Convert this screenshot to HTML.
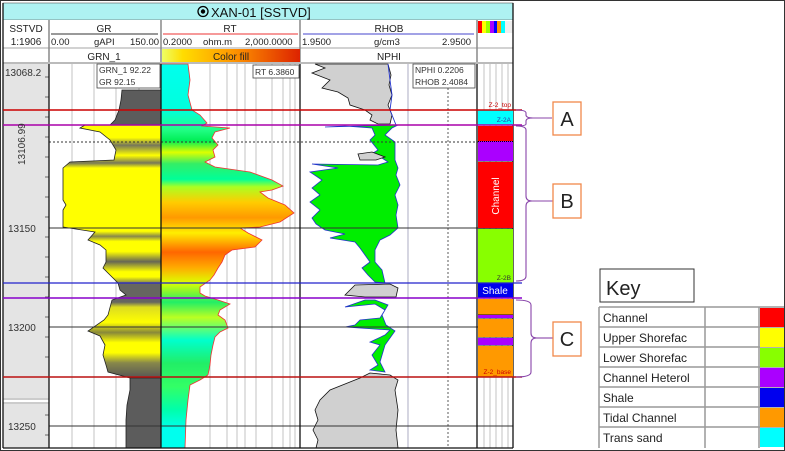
<!DOCTYPE html>
<html><head><meta charset="utf-8"><style>
html,body{margin:0;padding:0;background:#fff;}
svg{display:block;font-family:"Liberation Sans",sans-serif;}
</style></head><body>
<svg width="785" height="451" viewBox="0 0 785 451" xmlns="http://www.w3.org/2000/svg">
<defs>
<linearGradient id="gry" gradientUnits="userSpaceOnUse" x1="0" y1="125" x2="0" y2="378">
<stop offset="0" stop-color="#ffff00"/><stop offset="0.05" stop-color="#ffff00"/>
<stop offset="0.08" stop-color="#77775a"/><stop offset="0.12" stop-color="#ffff00"/>
<stop offset="0.15" stop-color="#77775a"/><stop offset="0.17" stop-color="#ffff00"/>
<stop offset="0.42" stop-color="#ffff00"/><stop offset="0.44" stop-color="#88884a"/>
<stop offset="0.46" stop-color="#ffff00"/><stop offset="0.5" stop-color="#ffff00"/>
<stop offset="0.54" stop-color="#666655"/><stop offset="0.58" stop-color="#ffff00"/>
<stop offset="0.6" stop-color="#ffff00"/><stop offset="0.63" stop-color="#666660"/>
<stop offset="0.7" stop-color="#666660"/><stop offset="0.72" stop-color="#dddd20"/>
<stop offset="0.78" stop-color="#ffff00"/><stop offset="0.82" stop-color="#88883a"/>
<stop offset="0.86" stop-color="#ffff00"/><stop offset="0.9" stop-color="#ffff00"/>
<stop offset="0.94" stop-color="#88884a"/><stop offset="1" stop-color="#555555"/>
</linearGradient>
<linearGradient id="rtg" gradientUnits="userSpaceOnUse" x1="0" y1="64" x2="0" y2="448">
<stop offset="0" stop-color="#00ffee"/><stop offset="0.12" stop-color="#00ffdd"/>
<stop offset="0.17" stop-color="#22ff88"/><stop offset="0.2" stop-color="#00ee55"/>
<stop offset="0.23" stop-color="#ddff00"/><stop offset="0.26" stop-color="#33ee66"/>
<stop offset="0.3" stop-color="#00ff99"/><stop offset="0.32" stop-color="#aaff22"/>
<stop offset="0.36" stop-color="#ffcc00"/><stop offset="0.4" stop-color="#ff9900"/>
<stop offset="0.44" stop-color="#ffee00"/><stop offset="0.49" stop-color="#ff6600"/>
<stop offset="0.53" stop-color="#ffaa00"/><stop offset="0.57" stop-color="#ddff00"/>
<stop offset="0.62" stop-color="#22ee66"/><stop offset="0.66" stop-color="#bbff22"/>
<stop offset="0.72" stop-color="#00ffcc"/><stop offset="0.78" stop-color="#22ee66"/>
<stop offset="0.84" stop-color="#33ff66"/><stop offset="0.9" stop-color="#00ffaa"/>
<stop offset="0.95" stop-color="#00ffee"/><stop offset="1" stop-color="#00ffee"/>
</linearGradient>
<linearGradient id="cf" x1="0" x2="1" y1="0" y2="0">
<stop offset="0" stop-color="#eeff66"/><stop offset="0.15" stop-color="#ffdd00"/>
<stop offset="0.5" stop-color="#ff9900"/><stop offset="1" stop-color="#dd2200"/>
</linearGradient>
</defs>
<rect x="0" y="0" width="785" height="451" fill="#fff"/>
<rect x="0.5" y="0.5" width="784" height="450" fill="none" stroke="#333"/>
<rect x="3" y="3" width="510" height="17" fill="#aef2f2" stroke="#555" stroke-width="0.6"/>
<circle cx="203" cy="11.5" r="5" fill="none" stroke="#000" stroke-width="1.3"/>
<circle cx="203" cy="11.5" r="2.2" fill="#000"/>
<text x="211" y="17" font-size="13" fill="#111">XAN-01 [SSTVD]</text>
<rect x="3" y="20" width="510" height="44" fill="#fff"/>
<g stroke="#222" stroke-width="0.8">
<line x1="49" y1="20" x2="49" y2="64"/><line x1="161" y1="20" x2="161" y2="64"/>
<line x1="300" y1="20" x2="300" y2="64"/><line x1="477" y1="20" x2="477" y2="64"/>
<line x1="3" y1="48" x2="513" y2="48" stroke="#888"/>
<line x1="3" y1="63" x2="513" y2="63" stroke="#bbb" stroke-width="2"/>
</g>
<g font-size="10" fill="#222" text-anchor="middle">
<text x="26" y="32">SSTVD</text><text x="104" y="32">GR</text><text x="230" y="32">RT</text><text x="389" y="32">RHOB</text>
<text x="26" y="45">1:1906</text><text x="104" y="60">GRN_1</text><text x="389" y="60">NPHI</text>
</g>
<line x1="51" y1="34" x2="158" y2="34" stroke="#333"/>
<line x1="163" y1="34" x2="298" y2="34" stroke="#e33"/>
<line x1="303" y1="34" x2="474" y2="34" stroke="#44c"/>
<g font-size="9.5" fill="#222">
<text x="51" y="45">0.00</text><text x="94" y="45">gAPI</text><text x="130" y="45">150.00</text>
<text x="163" y="45">0.2000</text><text x="203" y="45">ohm.m</text><text x="245" y="45">2,000.0000</text>
<text x="302" y="45">1.9500</text><text x="374" y="45">g/cm3</text><text x="442" y="45">2.9500</text>
</g>
<rect x="162" y="49" width="138" height="13" fill="url(#cf)"/>
<text x="231" y="60" font-size="10" text-anchor="middle" fill="#222">Color fill</text>
<rect x="478" y="21" width="4" height="12" fill="#f00"/><rect x="482" y="21" width="4" height="12" fill="#ff0"/>
<rect x="486" y="21" width="4" height="12" fill="#9f0"/><rect x="490" y="21" width="4" height="12" fill="#a0f"/>
<rect x="494" y="21" width="3" height="12" fill="#00f"/><rect x="497" y="21" width="4" height="12" fill="#f90"/>
<rect x="501" y="21" width="4" height="12" fill="#0ff"/><rect x="505" y="21" width="8" height="12" fill="#eee"/>
<rect x="3" y="64" width="46" height="384" fill="#e4e4e4"/>
<rect x="3" y="398" width="46" height="6" fill="#fff"/>
<line x1="3" y1="399" x2="49" y2="399" stroke="#333" stroke-width="0.6"/>
<line x1="3" y1="403" x2="49" y2="403" stroke="#333" stroke-width="0.6"/>
<g stroke="#aaa" stroke-width="0.7">
<line x1="72" y1="64" x2="72" y2="448"/><line x1="94" y1="64" x2="94" y2="448"/><line x1="116" y1="64" x2="116" y2="448"/><line x1="139" y1="64" x2="139" y2="448"/>
<line x1="210" y1="64" x2="210" y2="448"/><line x1="227" y1="64" x2="227" y2="448"/><line x1="237" y1="64" x2="237" y2="448"/><line x1="245" y1="64" x2="245" y2="448"/>
<line x1="256" y1="64" x2="256" y2="448"/><line x1="272" y1="64" x2="272" y2="448"/><line x1="283" y1="64" x2="283" y2="448"/><line x1="290" y1="64" x2="290" y2="448"/><line x1="295" y1="64" x2="295" y2="448"/>
<line x1="408" y1="64" x2="408" y2="448" stroke="#88a"/>
<line x1="484" y1="64" x2="484" y2="448"/><line x1="490" y1="64" x2="490" y2="448"/><line x1="496" y1="64" x2="496" y2="448"/><line x1="502" y1="64" x2="502" y2="448"/><line x1="508" y1="64" x2="508" y2="448"/>
</g>
<line x1="448" y1="64" x2="448" y2="448" stroke="#333" stroke-dasharray="2,2" stroke-width="0.8"/>
<g stroke="#333" stroke-width="0.7">
<line x1="45" y1="77" x2="49" y2="77"/><line x1="45" y1="97" x2="49" y2="97"/><line x1="45" y1="117" x2="49" y2="117"/><line x1="45" y1="137" x2="49" y2="137"/><line x1="45" y1="157" x2="49" y2="157"/><line x1="45" y1="177" x2="49" y2="177"/><line x1="45" y1="197" x2="49" y2="197"/><line x1="45" y1="217" x2="49" y2="217"/><line x1="45" y1="237" x2="49" y2="237"/><line x1="45" y1="257" x2="49" y2="257"/><line x1="45" y1="277" x2="49" y2="277"/><line x1="45" y1="297" x2="49" y2="297"/><line x1="45" y1="317" x2="49" y2="317"/><line x1="45" y1="337" x2="49" y2="337"/><line x1="45" y1="357" x2="49" y2="357"/><line x1="45" y1="377" x2="49" y2="377"/><line x1="45" y1="415" x2="49" y2="415"/><line x1="45" y1="435" x2="49" y2="435"/>
</g>
<polygon fill="#5c5c5c" stroke="#222" stroke-width="0.8" points="161,90 122,90 121,100 119,110 115,120 110,125 161,125"/>
<polygon fill="url(#gry)" stroke="#222" stroke-width="0.8" points="161,125 85,125 80,128 100,132 110,140 116,150 114,160 70,162 63,168 63,200 66,205 63,210 63,227 95,232 88,240 100,245 106,250 106,262 103,268 110,275 118,283 120,290 126,295 112,300 108,315 104,320 88,331 100,336 105,345 103,355 106,365 108,372 130,378 161,378"/>
<polygon fill="#5c5c5c" stroke="#222" stroke-width="0.8" points="161,378 130,378 130,390 127,405 126,420 126,448 161,448"/>
<polygon fill="url(#rtg)" stroke="#e33" stroke-width="0.8" points="161,64 188,64 190,80 188,95 192,110 200,115 207,123 202,126 230,128 215,132 212,138 218,145 213,150 215,157 205,162 215,167 250,172 272,180 283,186 272,190 260,192 268,198 285,205 294,213 280,222 260,227 240,228 248,233 262,240 255,247 232,250 225,255 222,262 218,268 214,275 210,280 200,287 200,293 205,296 218,300 230,304 220,310 218,315 225,320 228,328 220,332 215,337 213,345 211,355 210,365 208,375 200,380 190,385 188,400 186,420 185,448 161,448"/>
<polygon fill="#d0d0d0" stroke="#111" stroke-width="0.8" points="315,64 325,68 312,73 330,80 322,88 338,92 348,98 350,105 365,110 372,115 370,120 378,124 390,124 392,115 388,105 392,95 389,85 391,75 388,64"/>
<polygon fill="#00ee00" stroke="#2233cc" stroke-width="0.8" points="325,127 345,126 372,128 375,135 370,140 374,145 378,150 370,155 382,158 388,162 378,165 312,164 338,168 310,172 322,180 312,188 320,195 310,202 320,210 312,218 316,224 325,230 345,234 330,238 355,242 360,248 365,255 370,262 362,268 368,275 375,282 385,283 382,270 375,262 375,250 380,240 390,235 398,228 396,215 398,205 395,195 400,185 396,175 398,168 395,160 395,142 385,135 392,128 398,125"/>
<polygon fill="#d0d0d0" stroke="#111" stroke-width="0.8" points="358,154 372,152 385,157 376,160 360,160"/>
<polygon fill="#d0d0d0" stroke="#111" stroke-width="0.8" points="355,285 390,284 398,288 396,297 365,297 345,295 350,290"/>
<polygon fill="#00ee00" stroke="#2233cc" stroke-width="0.8" points="345,307 375,304 385,310 380,318 360,320 355,325 345,327 390,330 385,335 370,342 380,345 372,355 378,365 370,370 385,372 380,362 385,345 395,331 386,325 382,315 388,305 375,300 365,300"/>
<polygon fill="#d0d0d0" stroke="#111" stroke-width="0.8" points="370,373 360,378 345,384 330,390 320,400 315,410 318,420 313,430 318,440 316,448 398,448 396,430 398,410 395,390 398,380 390,375"/>
<polyline fill="none" stroke="#2233cc" stroke-width="0.9" points="388,64 390,80 392,95 390,110 396,125"/>
<g stroke="#333" stroke-width="0.9">
<line x1="49" y1="228" x2="513" y2="228"/><line x1="49" y1="327" x2="513" y2="327"/><line x1="49" y1="426" x2="513" y2="426"/>
</g>
<line x1="49" y1="142" x2="513" y2="142" stroke="#333" stroke-dasharray="2,2"/>
<g stroke="#111" stroke-width="1.3">
<line x1="49" y1="64" x2="49" y2="448"/><line x1="161" y1="64" x2="161" y2="448"/><line x1="300" y1="64" x2="300" y2="448"/><line x1="477" y1="64" x2="477" y2="448"/><line x1="513" y1="3" x2="513" y2="448"/>
<line x1="3" y1="448" x2="513" y2="448"/><line x1="3" y1="3" x2="3" y2="448"/>
</g>
<rect x="478" y="110" width="35" height="15" fill="#00ffff"/>
<rect x="478" y="126" width="35" height="15" fill="#ff0000"/>
<rect x="478" y="141" width="35" height="20" fill="#aa00ff"/>
<line x1="478" y1="141.5" x2="513" y2="141.5" stroke="#000" stroke-dasharray="1,1"/>
<rect x="478" y="162" width="35" height="66" fill="#ff0000"/>
<rect x="478" y="229" width="35" height="54" fill="#88ff00"/>
<rect x="478" y="283" width="35" height="15" fill="#0000ee"/>
<rect x="478" y="299" width="35" height="16" fill="#ff9900"/>
<rect x="478" y="315" width="35" height="3" fill="#aa00ff"/>
<rect x="478" y="319" width="35" height="18" fill="#ff9900"/>
<rect x="478" y="338" width="35" height="7" fill="#aa00ff"/>
<rect x="478" y="346" width="35" height="31" fill="#ff9900"/>
<g stroke="#111" stroke-width="0.6"><line x1="478" y1="161.5" x2="513" y2="161.5"/><line x1="478" y1="228.5" x2="513" y2="228.5"/><line x1="478" y1="314.5" x2="513" y2="314.5"/><line x1="478" y1="318.5" x2="513" y2="318.5"/><line x1="478" y1="337.5" x2="513" y2="337.5"/><line x1="478" y1="345.5" x2="513" y2="345.5"/></g>
<text transform="translate(499,196) rotate(-90)" font-size="10" fill="#fff" text-anchor="middle">Channel</text>
<text x="495" y="294" font-size="10" fill="#fff" text-anchor="middle">Shale</text>
<g font-size="6.5" text-anchor="end">
<text x="511" y="107" fill="#c00">Z-2_top</text><text x="511" y="122" fill="#33a">Z-2A</text>
<text x="511" y="280" fill="#333">Z-2B</text><text x="511" y="374" fill="#c00">Z-2_base</text>
</g>
<line x1="3" y1="110" x2="522" y2="110" stroke="#c00" stroke-width="1.5"/>
<line x1="3" y1="125" x2="522" y2="125" stroke="#a0a" stroke-width="1.5"/>
<line x1="3" y1="283" x2="522" y2="283" stroke="#22c" stroke-width="1.2"/>
<line x1="3" y1="298" x2="522" y2="298" stroke="#80c" stroke-width="1.5"/>
<line x1="3" y1="377" x2="522" y2="377" stroke="#b11" stroke-width="1.5"/>
<g font-size="10" fill="#333">
<text x="5" y="76">13068.2</text><text x="8" y="232">13150</text><text x="8" y="331">13200</text><text x="8" y="430">13250</text>
<text transform="translate(25,165) rotate(-90)">13106.99</text>
</g>
<rect x="97" y="64" width="63" height="24" fill="#fff" stroke="#444" stroke-width="0.8"/>
<text x="99" y="73" font-size="8.5" fill="#333">GRN_1 92.22</text><text x="99" y="85" font-size="8.5" fill="#333">GR 92.15</text>
<rect x="253" y="65" width="46" height="13" fill="#fff" stroke="#444" stroke-width="0.8"/>
<text x="255" y="75" font-size="8.5" fill="#333">RT 6.3860</text>
<rect x="413" y="64" width="62" height="24" fill="#fff" stroke="#444" stroke-width="0.8"/>
<text x="415" y="73" font-size="8.5" fill="#333">NPHI 0.2206</text><text x="415" y="85" font-size="8.5" fill="#333">RHOB 2.4084</text>
<g fill="none" stroke="#8844aa" stroke-width="1.1">
<path d="M516,110 Q526,110 526,113 L526,115 Q526,118 533,118 Q526,118 526,121 L526,124 Q526,126 516,126"/>
<line x1="533" y1="118" x2="552" y2="118"/>
<path d="M516,126 Q526,126 526,130 L526,196 Q526,201 532,201 Q526,201 526,206 L526,276 Q526,281 516,281"/>
<line x1="532" y1="201" x2="553" y2="201"/>
<path d="M516,300 Q531,300 531,305 L531,333 Q531,338 537,338 Q531,338 531,343 L531,372 Q531,377 516,377"/>
<line x1="537" y1="338" x2="553" y2="338"/>
</g>
<g fill="#fff" stroke="#f0884a" stroke-width="1.3">
<rect x="553" y="102" width="28" height="33"/><rect x="553" y="184" width="28" height="34"/><rect x="553" y="322" width="28" height="34"/>
</g>
<g font-size="20" fill="#222" text-anchor="middle">
<text x="567" y="126">A</text><text x="567" y="208">B</text><text x="567" y="346">C</text>
</g>
<rect x="600" y="269" width="94" height="33" fill="#fff" stroke="#333" stroke-width="1"/>
<text x="606" y="295" font-size="20" fill="#222">Key</text>
<g stroke="#999" stroke-width="1.5">
<line x1="599" y1="307" x2="784" y2="307"/><line x1="599" y1="327" x2="784" y2="327"/><line x1="599" y1="347" x2="784" y2="347"/><line x1="599" y1="367" x2="784" y2="367"/><line x1="599" y1="387" x2="784" y2="387"/><line x1="599" y1="407" x2="784" y2="407"/><line x1="599" y1="427" x2="784" y2="427"/>
<line x1="599" y1="307" x2="599" y2="448"/><line x1="705" y1="307" x2="705" y2="448"/><line x1="759" y1="307" x2="759" y2="448"/>
</g>
<rect x="760" y="308" width="24" height="19" fill="#f00"/><rect x="760" y="328" width="24" height="19" fill="#ff0"/>
<rect x="760" y="348" width="24" height="19" fill="#8f0"/><rect x="760" y="368" width="24" height="19" fill="#a0f"/>
<rect x="760" y="388" width="24" height="19" fill="#00e"/><rect x="760" y="408" width="24" height="19" fill="#f90"/>
<rect x="760" y="428" width="24" height="19" fill="#0ff"/>
<g font-size="12" fill="#222">
<text x="603" y="322">Channel</text><text x="603" y="342">Upper Shorefac</text><text x="603" y="362">Lower Shorefac</text>
<text x="603" y="382">Channel Heterol</text><text x="603" y="402">Shale</text><text x="603" y="422">Tidal Channel</text><text x="603" y="442">Trans sand</text>
</g>
</svg>
</body></html>
